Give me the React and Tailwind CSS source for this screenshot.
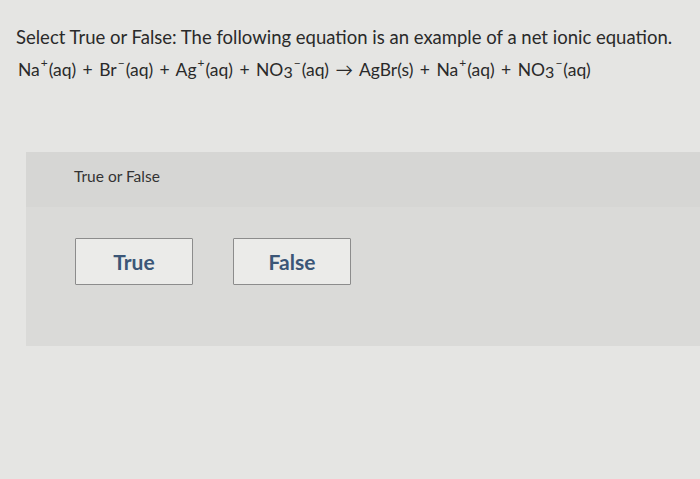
function Ion({ c }) {
  return <sup className="text-[12px] -top-[0.75em] mx-[1px]">{c}</sup>;
}

function Three() {
  return <sub className="text-[16px] -bottom-[2px]">3</sub>;
}

function Choice({ label }) {
  return (
    <button className="flex items-center justify-center w-[118px] h-[47px] border border-[#8c8c8c] rounded-[1px] bg-[#ebebe9] text-[21px] font-bold text-[#3b5677]">
      {label}
    </button>
  );
}

export default function App() {
  return (
    <div
      className="flex flex-col w-[700px] h-[479px] overflow-hidden bg-[#e5e5e3] text-[#2a2a2a]"
      style={{ fontFamily: "Lato, 'Open Sans', sans-serif" }}
    >
      <div className="flex flex-col gap-[8px] pt-[25px] pl-[16px]">
        <p className="text-[18.5px] leading-[25px]">
          Select True or False: The following equation is an example of a net ionic equation.
        </p>
        <p className="pl-[2px] text-[17.5px] leading-[24px] whitespace-nowrap [word-spacing:2px]">
          Na<Ion c="+" />(aq) + Br<Ion c="−" />(aq) + Ag<Ion c="+" />(aq) + NO<Three /><Ion c="−" />(aq) → AgBr(s) + Na<Ion c="+" />(aq) + NO<Three /><Ion c="−" />(aq)
        </p>
      </div>
      <div className="flex flex-col mt-[70px] ml-[26px] h-[194px] bg-[#dadad8]">
        <div className="flex items-center h-[55px] bg-[#d6d6d4] pl-[48px] pb-[5px] text-[15.5px] text-[#333]">
          True or False
        </div>
        <div className="flex gap-[40px] pl-[49px] pt-[31px]">
          <Choice label="True" />
          <Choice label="False" />
        </div>
      </div>
    </div>
  );
}
